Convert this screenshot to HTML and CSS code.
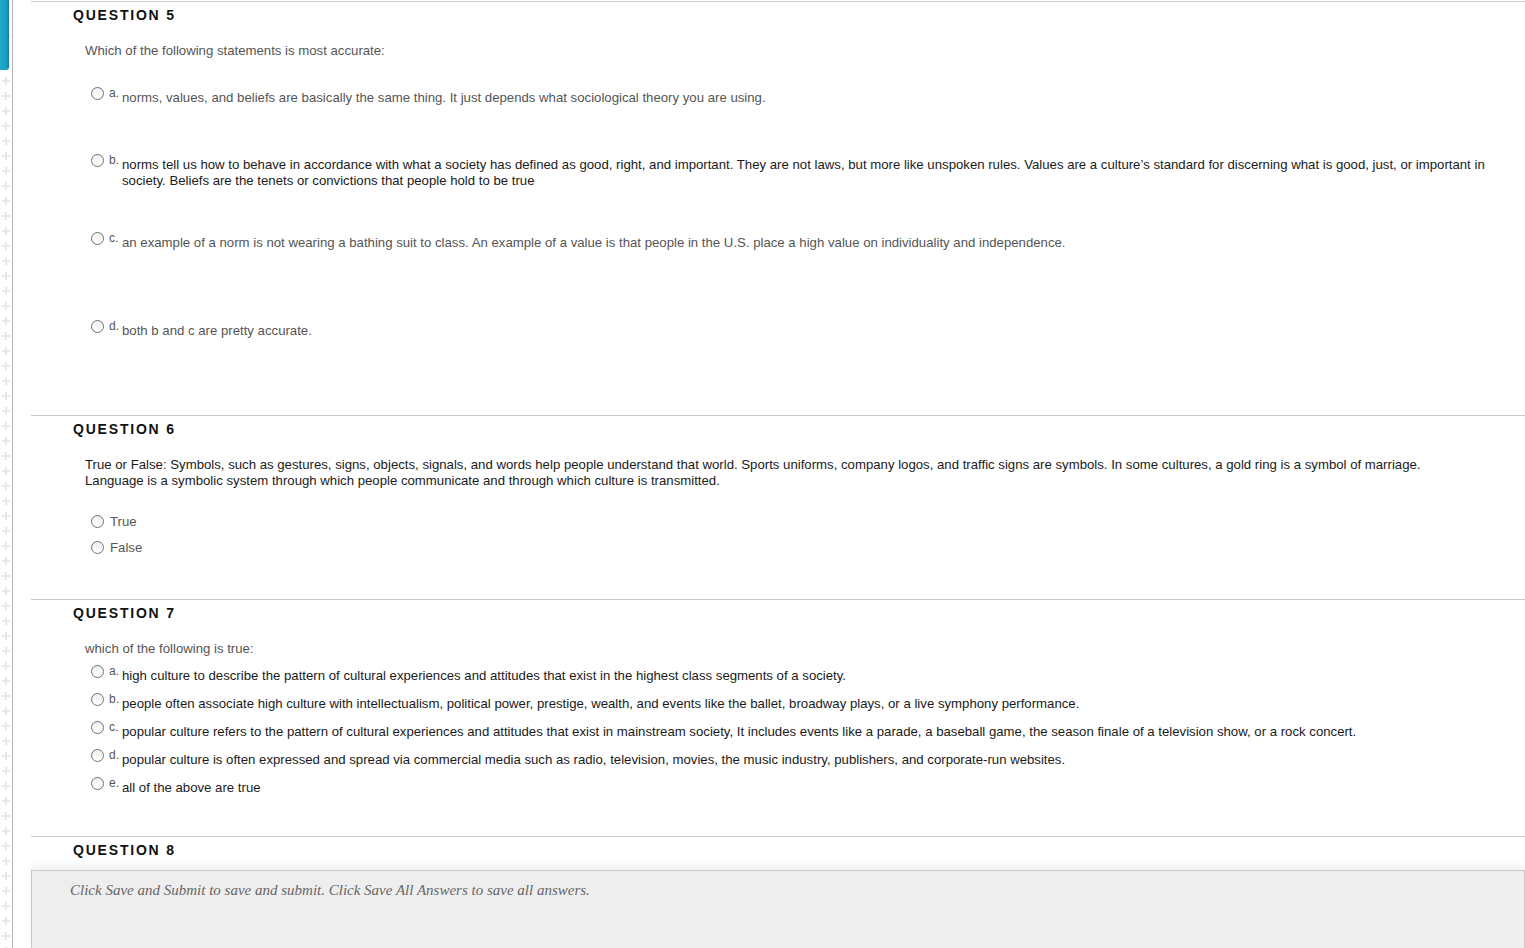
FILE: index.html
```html
<!DOCTYPE html>
<html>
<head>
<meta charset="utf-8">
<title>Test</title>
<link rel="stylesheet" href="styles.css">
</head>
<body>
<div class="rail"><div class="rail-tab"></div></div>
<main class="main">
  <section class="question q5">
    <h2 class="q-title">QUESTION 5</h2>
    <p class="q-text q-text--muted">Which of the following statements is most accurate:</p>
    <div class="options">
      <div class="opt opt--h67"><span class="radio"></span><span class="opt-letter">a.</span><span class="opt-text opt-text--muted">norms, values, and beliefs are basically the same thing. It just depends what sociological theory you are using.</span></div>
      <div class="opt opt--h78"><span class="radio"></span><span class="opt-letter">b.</span><span class="opt-text">norms tell us how to behave in accordance with what a society has defined as good, right, and important. They are not laws, but more like unspoken rules. Values are a culture’s standard for discerning what is good, just, or important in society. Beliefs are the tenets or convictions that people hold to be true</span></div>
      <div class="opt opt--h88"><span class="radio"></span><span class="opt-letter">c.</span><span class="opt-text opt-text--muted">an example of a norm is not wearing a bathing suit to class. An example of a value is that people in the U.S. place a high value on individuality and independence.</span></div>
      <div class="opt"><span class="radio"></span><span class="opt-letter">d.</span><span class="opt-text opt-text--muted">both b and c are pretty accurate.</span></div>
    </div>
  </section>

  <section class="question q6">
    <h2 class="q-title">QUESTION 6</h2>
    <p class="q-text">True or False: Symbols, such as gestures, signs, objects, signals, and words help people understand that world. Sports uniforms, company logos, and traffic signs are symbols. In some cultures, a gold ring is a symbol of marriage. Language is a symbolic system through which people communicate and through which culture is transmitted.</p>
    <div class="tf">
      <div class="tf-row"><span class="radio"></span><span class="tf-text">True</span></div>
      <div class="tf-row"><span class="radio"></span><span class="tf-text">False</span></div>
    </div>
  </section>

  <section class="question q7">
    <h2 class="q-title">QUESTION 7</h2>
    <p class="q-text q-text--muted">which of the following is true:</p>
    <div class="options options--tight">
      <div class="opt"><span class="radio"></span><span class="opt-letter">a.</span><span class="opt-text">high culture to describe the pattern of cultural experiences and attitudes that exist in the highest class segments of a society.</span></div>
      <div class="opt"><span class="radio"></span><span class="opt-letter">b.</span><span class="opt-text">people often associate high culture with intellectualism, political power, prestige, wealth, and events like the ballet, broadway plays, or a live symphony performance.</span></div>
      <div class="opt"><span class="radio"></span><span class="opt-letter">c.</span><span class="opt-text">popular culture refers to the pattern of cultural experiences and attitudes that exist in mainstream society, It includes events like a parade, a baseball game, the season finale of a television show, or a rock concert.</span></div>
      <div class="opt"><span class="radio"></span><span class="opt-letter">d.</span><span class="opt-text">popular culture is often expressed and spread via commercial media such as radio, television, movies, the music industry, publishers, and corporate-run websites.</span></div>
      <div class="opt"><span class="radio"></span><span class="opt-letter">e.</span><span class="opt-text">all of the above are true</span></div>
    </div>
  </section>

  <section class="question q8">
    <h2 class="q-title">QUESTION 8</h2>
  </section>

  <footer class="submit-bar">
    <p class="submit-note">Click Save and Submit to save and submit. Click Save All Answers to save all answers.</p>
  </footer>
</main>
</body>
</html>
```

FILE: styles.css
```css
html, body {
  margin: 0;
  padding: 0;
  height: 100%;
  overflow: hidden;
}
body {
  display: flex;
  background: #fff;
  font-family: "Liberation Sans", Arial, sans-serif;
  font-size: 13.2px;
  color: #222;
}
.rail {
  position: relative;
  width: 12px;
  flex: 0 0 12px;
  border-right: 1px solid #b3b3b3;
  background-color: #fff;
  background-image: url("data:image/svg+xml;utf8,<svg xmlns='http://www.w3.org/2000/svg' width='12' height='15'><rect x='2' y='5' width='8' height='2' fill='%23e8e8e8'/><rect x='5' y='2' width='2' height='8' fill='%23e8e8e8'/></svg>");
  background-repeat: repeat-y;
}
.rail-tab {
  position: absolute;
  left: 0;
  top: 0;
  width: 9px;
  height: 70px;
  background: linear-gradient(90deg, #22a9cc 0%, #1a9dc0 70%, #11809f 100%);
  border-bottom-right-radius: 3px;
}
.main {
  flex: 1;
  padding-left: 18px;
  display: flex;
  flex-direction: column;
}
.question {
  border-top: 1px solid #cccccc;
  padding-right: 36px;
}
.q5 { margin-top: 1px; padding-bottom: 76px; }
.q6 { padding-bottom: 43px; }
.q7 { padding-bottom: 40px; }
.q-title {
  margin: 5px 0 0 42px;
  font-size: 14px;
  line-height: 16px;
  font-weight: bold;
  letter-spacing: 1.8px;
  color: #111;
}
.q-text {
  margin: 20px 16px 0 54px;
  line-height: 15.5px;
  color: #1a1a1a;
}
.q-text--muted { color: #555; line-height: 16px; }
.options {
  margin: 31px 0 0 60px;
  display: flex;
  flex-direction: column;
}
.options--tight { margin-top: 11px; gap: 12px; }
.opt {
  display: flex;
  align-items: flex-start;
}
.opt--h67 { height: 67px; }
.opt--h78 { height: 78px; }
.opt--h88 { height: 88px; }
.radio {
  flex: 0 0 auto;
  width: 11px;
  height: 11px;
  margin-top: -3px;
  border: 1px solid #6f6f6f;
  border-radius: 50%;
  background: linear-gradient(#f0f0f0, #ffffff);
}
.opt-letter {
  width: 13px;
  margin-left: 5px;
  margin-top: -3px;
  font-size: 12px;
  line-height: 12px;
  color: #555;
}
.opt-text {
  flex: 1;
  line-height: 16px;
  color: #1a1a1a;
}
.opt-text--muted { color: #555; }
.tf {
  margin: 26px 0 0 60px;
  display: flex;
  flex-direction: column;
  gap: 10px;
}
.tf-row {
  display: flex;
  align-items: center;
  height: 16px;
}
.tf-row .radio { margin-top: -1px; }
.tf-text {
  margin-left: 6px;
  line-height: 16px;
  color: #555;
}
.submit-bar {
  margin-top: 12px;
  flex: 1;
  background: #eeeeee;
  border: 1px solid #c8c8c8;
  border-bottom: none;
  box-shadow: 0 -5px 6px rgba(0, 0, 0, 0.05);
}
.submit-note {
  margin: 10px 0 0 38px;
  font-family: "Liberation Serif", "Times New Roman", serif;
  font-style: italic;
  font-size: 15px;
  line-height: 18px;
  color: #666;
}
```
